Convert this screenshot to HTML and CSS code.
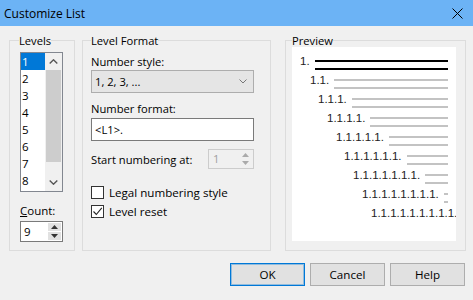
FILE: index.html
```html
<!DOCTYPE html>
<html>
<head>
<meta charset="utf-8">
<link rel="stylesheet" href="styles.css">
</head>
<body>
<div class="titlebar">
  <span class="title">Customize List</span>
  <svg class="close" viewBox="0 0 11 11"><path d="M0.5 0.5L10.5 10.5M10.5 0.5L0.5 10.5" stroke="#000" stroke-width="1" fill="none"/></svg>
</div>
<div class="main">
  <fieldset class="group levels">
    <legend>Levels</legend>
    <div class="listbox">
      <ul class="items">
        <li class="sel">1</li><li>2</li><li>3</li><li>4</li><li>5</li><li>6</li><li>7</li><li>8</li>
      </ul>
      <div class="vscroll">
        <div class="sb-btn"><svg viewBox="0 0 9 5" class="chev"><path d="M0.7 4.5L4.5 0.8L8.3 4.5" stroke="#555" stroke-width="1.4" fill="none"/></svg></div>
        <div class="thumb"></div>
        <div class="track"></div>
        <div class="sb-btn"><svg viewBox="0 0 9 5" class="chev"><path d="M0.7 0.5L4.5 4.2L8.3 0.5" stroke="#555" stroke-width="1.4" fill="none"/></svg></div>
      </div>
    </div>
    <div class="count-label"><u>C</u>ount:</div>
    <div class="spin count">
      <span class="val">9</span>
      <div class="spin-btns">
        <span class="sbtn"><svg viewBox="0 0 7 4"><path d="M0 4L3.5 0L7 4Z" fill="#333"/></svg></span>
        <span class="sbtn"><svg viewBox="0 0 7 4"><path d="M0 0L3.5 4L7 0Z" fill="#333"/></svg></span>
      </div>
    </div>
  </fieldset>

  <fieldset class="group format">
    <legend>Level Format</legend>
    <div class="label">Number style:</div>
    <div class="combo">
      <span>1, 2, 3, ...</span>
      <svg class="combo-chev" viewBox="0 0 8 5"><path d="M0.5 0.5L4 4L7.5 0.5" stroke="#777" stroke-width="1" fill="none"/></svg>
    </div>
    <div class="label label2">Number format:</div>
    <div class="textbox">&lt;L1&gt;.</div>
    <div class="start-row">
      <span>Start numbering at:</span>
      <div class="spin start disabled">
        <span class="val">1</span>
        <div class="spin-btns">
          <span class="sbtn"><svg viewBox="0 0 7 4"><path d="M0 4L3.5 0L7 4Z" fill="#aaa"/></svg></span>
          <span class="sbtn"><svg viewBox="0 0 7 4"><path d="M0 0L3.5 4L7 0Z" fill="#aaa"/></svg></span>
        </div>
      </div>
    </div>
    <div class="check-row first">
      <span class="checkbox"></span><span>Legal numbering style</span>
    </div>
    <div class="check-row">
      <span class="checkbox"><svg viewBox="0 0 11 11"><path d="M1.5 5.5L4.3 8.5L9.8 1.8" stroke="#222" stroke-width="1.1" fill="none"/></svg></span><span>Level reset</span>
    </div>
  </fieldset>

  <fieldset class="group preview">
    <legend>Preview</legend>
    <div class="pv-box">
      <div class="pv-row l0 top"><span>1.</span><div class="pv-lines"><i></i><i></i></div></div>
      <div class="pv-row l1"><span>1.1.</span><div class="pv-lines"><i></i><i></i></div></div>
      <div class="pv-row l2"><span>1.1.1.</span><div class="pv-lines"><i></i><i></i></div></div>
      <div class="pv-row l3"><span>1.1.1.1.</span><div class="pv-lines"><i></i><i></i></div></div>
      <div class="pv-row l4"><span>1.1.1.1.1.</span><div class="pv-lines"><i></i><i></i></div></div>
      <div class="pv-row l5"><span>1.1.1.1.1.1.</span><div class="pv-lines"><i></i><i></i></div></div>
      <div class="pv-row l6"><span>1.1.1.1.1.1.1.</span><div class="pv-lines"><i></i><i></i></div></div>
      <div class="pv-row l7"><span>1.1.1.1.1.1.1.1.</span><div class="pv-lines"><i></i><i></i></div></div>
      <div class="pv-row l8"><span>1.1.1.1.1.1.1.1.1.</span><div class="pv-lines"><i></i><i></i></div></div>
    </div>
  </fieldset>
</div>
<div class="buttons">
  <button class="btn default">OK</button>
  <button class="btn">Cancel</button>
  <button class="btn">Help</button>
</div>
</body>
</html>
```
FILE: styles.css
```css
* { box-sizing: border-box; }
html, body { margin: 0; }
body {
  width: 473px;
  height: 300px;
  overflow: hidden;
  background: #f0f0f0;
  font-family: "Open Sans", "Noto Sans", sans-serif;
  font-size: 11.2px;
  color: #000;
}
.titlebar {
  height: 26px;
  background: #6cb3f5;
  display: flex;
  align-items: center;
  justify-content: space-between;
  padding: 0 10px 0 4px;
}
.title { font-size: 12px; }
.close { width: 11px; height: 11px; display: block; }

.main {
  display: flex;
  padding: 8px 0 0 9px;
}
.group {
  margin: 0;
  border: 1px solid #dcdcdc;
  height: 217px;
  min-width: 0;
}
.group legend {
  padding: 0;
  line-height: 13px;
}

/* Levels */
.levels {
  width: 66px;
  padding: 5px 11px 0 10px;
}
.levels legend { margin-left: -1px; }
.listbox {
  width: 43px;
  height: 140px;
  border: 1px solid #828790;
  background: #fff;
  display: flex;
}
.items {
  list-style: none;
  margin: 0;
  padding: 0;
  flex: 1;
  font-size: 11.5px;
}
.items li {
  height: 17px;
  line-height: 17px;
  padding-left: 1px;
}
.items li.sel { background: #0078d7; color: #fff; }
.vscroll {
  width: 17px;
  display: flex;
  flex-direction: column;
  background: #f0f0f0;
}
.sb-btn {
  height: 17px;
  display: flex;
  align-items: center;
  justify-content: center;
}
.chev { width: 9px; height: 5px; display: block; }
.thumb {
  height: 92px;
  margin: 0 1px;
  background: #cdcdcd;
}
.track { flex: 1; }

.count-label {
  margin-top: 11px;
  line-height: 16px;
  font-size: 11.5px;
}
.spin {
  display: flex;
  border: 1px solid #7a7a7a;
  background: #fff;
}
.spin .val {
  flex: 1;
  padding-left: 3px;
}
.spin-btns {
  width: 14px;
  display: flex;
  flex-direction: column;
  padding: 1px 1px 1px 0;
  gap: 1px;
}
.sbtn {
  flex: 1;
  background: #e1e1e1;
  display: flex;
  align-items: center;
  justify-content: center;
}
.sbtn svg { width: 7px; height: 4px; display: block; }
.count {
  margin-top: 2px;
  width: 43px;
  height: 21px;
  line-height: 19px;
  font-size: 11.5px;
}

/* Level Format */
.format {
  width: 189px;
  padding: 7px 16px 0 8px;
}
.label { line-height: 16px; }
.label2 { margin-top: 8px; }
.combo {
  width: 163px;
  height: 23px;
  border: 1px solid #adadad;
  background: #e5e5e5;
  display: flex;
  align-items: center;
  justify-content: space-between;
  padding: 0 6px 0 3px;
}
.combo-chev { width: 8px; height: 5px; display: block; }
.textbox {
  margin-top: 1px;
  width: 163px;
  height: 23px;
  border: 1px solid #7a7a7a;
  background: #fff;
  line-height: 21px;
  padding-left: 3px;
}
.start-row {
  margin-top: 8px;
  width: 163px;
  display: flex;
  align-items: center;
  justify-content: space-between;
}
.start {
  width: 46px;
  height: 20px;
  line-height: 18px;
}
.spin.disabled {
  border-color: #cccccc;
  background: #f0f0f0;
  color: #a0a0a0;
}
.spin.disabled .val { padding-left: 4px; }
.spin.disabled .sbtn { background: transparent; }
.check-row {
  display: flex;
  align-items: center;
  gap: 5px;
  height: 16px;
  margin-top: 3px;
  font-size: 11.6px;
}
.check-row.first { margin-top: 15px; }
.checkbox {
  width: 13px;
  height: 13px;
  border: 1px solid #333;
  background: #fff;
  display: flex;
  align-items: center;
  justify-content: center;
}
.checkbox svg { width: 11px; height: 11px; display: block; }

/* Preview */
.preview {
  width: 181px;
  margin-left: 14px;
  padding: 0 9px 9px 6px;
}
.levels + .format { margin-left: 7px; }
.pv-box {
  height: 194px;
  background: #fff;
  overflow: hidden;
  padding: 5px 8px 0 0;
}
.pv-row {
  height: 19px;
  display: flex;
  white-space: nowrap;
  font-family: "Liberation Sans", Arial, sans-serif;
  font-size: 11.5px;
  line-height: 19px;
  color: #222;
}
.pv-lines {
  flex: 1;
  min-width: 0;
  margin-left: 5px;
  margin-top: 8px;
  display: flex;
  flex-direction: column;
  gap: 6px;
}
.pv-lines i {
  display: block;
  height: 2px;
  background: #c3c3c3;
}
.pv-row.top .pv-lines i { background: #000; }
.l0 { padding-left: 8px; }
.l1 { padding-left: 18px; }
.l2 { padding-left: 26px; }
.l3 { padding-left: 35px; }
.l4 { padding-left: 44px; }
.l5 { padding-left: 52px; }
.l6 { padding-left: 61px; }
.l7 { padding-left: 70px; }
.l8 { padding-left: 79px; }

/* Buttons */
.buttons {
  display: flex;
  justify-content: flex-end;
  gap: 5px;
  padding-right: 8px;
  margin-top: 12px;
}
.btn {
  width: 75px;
  height: 23px;
  background: #e1e1e1;
  border: 1px solid #adadad;
  font-family: inherit;
  font-size: 11.6px;
  color: #000;
  padding: 0;
  margin: 0;
}
.btn.default {
  border-color: #0078d7;
  box-shadow: inset 0 0 0 1px rgba(0, 120, 215, 0.35);
}
```
